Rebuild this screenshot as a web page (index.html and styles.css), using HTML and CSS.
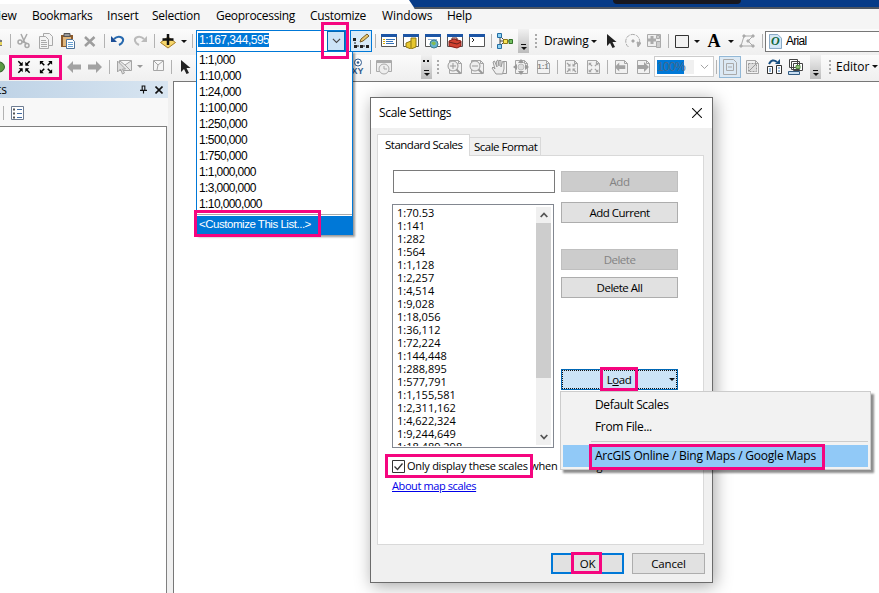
FILE: index.html
```
<!DOCTYPE html>
<html lang="en">
<head>
	<meta charset="UTF-8">
	<title>Scale Settings</title>
	<link rel="stylesheet" href="styles.css">
</head>
<body>
	<svg class="defs">
		<symbol id="page" viewBox="0 0 16 16"><path d="M2.500 1.500h9l3 3v10h-12z" fill="#f1f1f1" stroke="#a6a6a6"/><path d="M11.500 1.500v3h3" fill="none" stroke="#a6a6a6"/></symbol>
		<symbol id="win" viewBox="0 0 16 16"><path d="M.5 1.500h15v12H.5z" fill="#fff" stroke="#555"/><path d="M0 1h16v3H0z" fill="#1c55a5"/></symbol>
		<symbol id="pointer" viewBox="0 0 16 16"><path d="M4 1v12l3-3 2.500 5 2.500-1-2.500-5h4z" fill="#222"/></symbol>
		<symbol id="shrink" viewBox="0 0 16 16"><path d="M1.500 1.500l4 4M14.500 1.500l-4 4M1.500 14.500l4-4M14.500 14.500l-4-4" stroke="currentColor" stroke-width="1.800"/><path d="M2 6.500h4.500V2zM14 6.500H9.500V2zM2 9.500h4.500V14zM14 9.500H9.500V14z" fill="currentColor"/></symbol>
		<symbol id="expand" viewBox="0 0 16 16"><path d="M2 2l4 4M14 2l-4 4M2 14l4-4M14 14l-4-4" stroke="currentColor" stroke-width="1.800"/><path d="M1 1h4.500L1 5.500zM15 1h-4.500L15 5.500zM1 15h4.500L1 10.500zM15 15h-4.500l4.500-4.500z" fill="currentColor"/></symbol>
		<symbol id="arrow" viewBox="0 0 16 16"><path d="M1 8l6-6v3.500h8v5H7V14z" fill="currentColor"/></symbol>
	</svg>

	<div class="titlebar"><i></i></div>

	<nav class="menubar">
		<span class="m-view">View</span>
		<span class="m-book">Bookmarks</span>
		<span class="m-insert">Insert</span>
		<span class="m-select">Selection</span>
		<span class="m-geo">Geoprocessing</span>
		<span class="m-custom">Customize</span>
		<span class="m-win">Windows</span>
		<span>Help</span>
	</nav>

	<div class="toolbar">
		<span class="tool cut-off"><svg viewBox="0 0 16 16"><path d="M4 3h7l1 5H4z" fill="#fff" stroke="#666"/><path d="M1 7h13v6H1z" fill="#777"/><path d="M8 9h6v3H8z" fill="#e7d45c"/></svg></span>
		<span class="sep"></span>
		<span class="tool"><svg viewBox="0 0 16 16" fill="none" stroke="#a8a8a8" stroke-width="1.500"><path d="M5 1l4 9M11 1L7 9"/><circle cx="4" cy="9" r="2"/><circle cx="11" cy="12.500" r="2"/><path d="M6 8.500l5 2"/></svg></span>
		<span class="tool"><svg viewBox="0 0 16 16" fill="#f3f3f3" stroke="#a8a8a8"><path d="M5.500.500h6l3 3v9h-9z"/><path d="M1.500 3.500h6l3 3v9h-9z"/><path d="M3 7.500h5M3 9.500h6M3 11.500h6M3 13.500h6"/></svg></span>
		<span class="tool"><svg viewBox="0 0 16 16"><path d="M1 2h12v12H1z" fill="#8b5a2b"/><path d="M3 4h8v9H3z" fill="#e0b67c"/><path d="M4 .5h6v3H4z" fill="#999" stroke="#555"/><path d="M6.500 6.500h6l2 2v7h-8z" fill="#fff" stroke="#507399"/><path d="M8 9.500h5M8 11.500h5M8 13.500h5" stroke="#67a2d5"/></svg></span>
		<span class="tool"><svg viewBox="0 0 16 16"><path d="M3 4l9.500 9M12.500 4L3 13" stroke="#9d9d9d" stroke-width="2.500"/></svg></span>
		<span class="sep"></span>
		<span class="tool"><svg viewBox="0 0 16 16"><path d="M4 6C8 2 14 4 13 8c-.5 2-2 3-4 4" fill="none" stroke="#286aaf" stroke-width="2"/><path d="M1 3v6h6z" fill="#1c4e96"/></svg></span>
		<span class="tool"><svg viewBox="0 0 16 16"><path d="M12 6C8 2 2 4 3 8c.5 2 2 3 4 4" fill="none" stroke="#bbb" stroke-width="2"/><path d="M15 3v6H9z" fill="#bbb"/></svg></span>
		<span class="sep"></span>
		<span class="tool"><svg viewBox="0 0 16 16"><path d="M8 4l7.500 5.500L8 15 .5 9.500z" fill="#f6d66b" stroke="#a67c25"/><path d="M8 1v11M2.500 6.500h11" stroke="#111" stroke-width="2.500"/></svg></span>
		<span class="caret w10"></span>
		<span class="sep w7"></span>
		<div class="scale-combo">
			<span class="picked">1:167,344,595</span>
			<button class="drop"><svg viewBox="0 0 10 6"><path d="M1 1l4 4 4-4" fill="none" stroke="#444" stroke-width="1.200"/></svg></button>
		</div>
		<span class="tool hot"><svg viewBox="0 0 16 16"><path d="M2 6v7h12" fill="none" stroke="#222" stroke-dasharray="2 1"/><path d="M0 5h3v3H0zM1 12h3v3H1zM7 12h3v3H7zM13 12h3v3h-3z" fill="#222"/><path d="M7 9l1-3 6-5 2 2-6 5z" fill="#e8c66c" stroke="#765b25"/></svg></span>
		<span class="sep"></span>
		<span class="tool"><svg viewBox="0 0 16 16"><use href="#win"/><path d="M2 6.500h2M2 8.500h2M2 10.500h2" stroke="#d7a900"/><path d="M5 6.500h9M5 8.500h7M5 10.500h8" stroke="#3672b8"/></svg></span>
		<span class="tool"><svg viewBox="0 0 16 16"><use href="#win"/><path d="M3 10l5-2V5h5v9l-5 2-5-2z" fill="#e7c72f" stroke="#8e7610"/><path d="M8 8v7" stroke="#8e7610"/></svg></span>
		<span class="tool"><svg viewBox="0 0 16 16"><use href="#win"/><path d="M3 6.500h9" stroke="#8cb1da"/><circle cx="9" cy="11" r="4" fill="#67b2cf" stroke="#3a7c8d"/><path d="M6 10q3-3 5 0-1 3-3 2z" fill="#83bc52"/></svg></span>
		<span class="tool"><svg viewBox="0 0 16 16"><use href="#win"/><path d="M2 8l5-2 7 2v5l-4 2-8-2z" fill="#d14131" stroke="#8b1c16"/><path d="M5 7V5h5v3M2 9l8 2 4-2" fill="none" stroke="#65201b"/></svg></span>
		<span class="tool"><svg viewBox="0 0 16 16"><use href="#win"/><path d="M3 5l2 2-2 2" fill="none" stroke="#222"/></svg></span>
		<span class="sep"></span>
		<span class="tool"><svg viewBox="0 0 16 16"><path d="M3 3v10M3 8h12M3 3l5 5-5 5" fill="none" stroke="#444"/><path d="M.5.500h4v4h-4zM.5 11.500h4v4h-4z" fill="#8ed2f4" stroke="#246da1"/><path d="M6.500 6.500h4v4h-4z" fill="#f9e65a" stroke="#907a15"/><path d="M12 6.500h3.500v4H12z" fill="#75c162" stroke="#337229"/></svg></span>
		<span class="overflow"></span>
		<span class="grip"></span>
		<span class="label drawing">Drawing</span>
		<span class="caret w12"></span>
		<span class="tool"><svg viewBox="0 0 16 16"><use href="#pointer"/></svg></span>
		<span class="tool w21"><svg viewBox="0 0 16 16" fill="none" stroke="#aaa"><path d="M3.500 14A7 7 0 1 1 13 13" stroke-dasharray="4 1"/><path d="M7 7h2v2H7z" fill="#999"/><path d="M12 9l1 5 3-4z" fill="#aaa"/></svg></span>
		<span class="tool"><svg viewBox="0 0 16 16" stroke="#aaa" fill="#eee"><path d="M1.500 1.500h13v12h-13z"/><path d="M6 3v8M2 7h8" stroke-width="3"/><path d="M10.500 2.500h3v3h-3zM10.500 8.500h4v6h-4z" fill="#ccc"/></svg></span>
		<span class="sep"></span>
		<span class="tool"><svg viewBox="0 0 16 16"><path d="M1.500 2.500h13v12h-13z" fill="#f1f1f1" stroke="#333"/></svg></span>
		<span class="caret w8"></span>
		<span class="tool w26 big-a">A</span>
		<span class="caret w8"></span>
		<span class="tool w24"><svg viewBox="0 0 16 16" fill="none" stroke="#aaa"><path d="M2 13L5 3h9l-5 5 5 5z"/><path d="M1 12h2v2H1zM4 2h2v2H4zM13 2h2v2h-2zM8 7h2v2H8zM13 12h2v2h-2z" fill="#aaa"/></svg></span>
		<span class="sep"></span>
		<div class="font-combo"><svg viewBox="0 0 14 16"><path d="M.5.500h9l4 4v11H.5z" fill="#d5e8f7" stroke="#7da0be"/></svg><b>O</b><span>Arial</span></div>
	</div>

	<div class="toolbar second">
		<span class="tool globe"></span>
		<span class="tool small"><svg viewBox="0 0 16 16"><use href="#shrink"/></svg></span>
		<span class="tool small"><svg viewBox="0 0 16 16"><use href="#expand"/></svg></span>
		<span class="tool gray back"><svg viewBox="0 0 16 16"><use href="#arrow"/></svg></span>
		<span class="tool gray w21 flip"><svg viewBox="0 0 16 16"><use href="#arrow"/></svg></span>
		<span class="sep"></span>
		<span class="tool w24"><svg viewBox="0 0 16 16" fill="#e8e8e8" stroke="#a5a5a5"><path d="M3.500 1.500h12v10h-12zM4 2l5 4 6-4M9 6l5 5"/><path d="M1.500 2v11l3-3 2 5 2-1-2-4h3z" fill="#ddd"/></svg></span>
		<span class="caret w8 dim"></span>
		<span class="tool region"><svg viewBox="0 0 16 16" fill="#f5f5f5" stroke="#a5a5a5"><path d="M3.500 1.500h10v10h-10zM4 2l4 4 5-4M8 6l-1 5"/></svg></span>
		<span class="sep w5"></span>
		<span class="tool"><svg viewBox="0 0 16 16"><use href="#pointer"/></svg></span>
		<span class="xy"><svg viewBox="0 0 10 9"><circle cx="5" cy="4.500" r="3.500" fill="#fff" stroke="#315b8d"/><circle cx="5" cy="4.500" r="1.300" fill="#315b8d"/></svg>XY</span>
		<span class="sep"></span>
		<span class="tool"><svg viewBox="0 0 16 16" fill="#eee" stroke="#aaa"><path d="M.5 1.500h15v11H.5z"/><path d="M1 3h14" stroke-width="2"/><circle cx="8" cy="10" r="5"/><path d="M8 7v3h3" fill="none"/></svg></span>
		<span class="overflow more"></span>
		<span class="grip"></span>
		<span class="tool"><svg viewBox="0 0 16 16" fill="#eee" stroke="#999"><use href="#page"/><circle cx="6" cy="7" r="5"/><path d="M3 7h6M6 4v6"/><path d="M9.500 10.500l4 4" stroke-width="2"/></svg></span>
		<span class="tool"><svg viewBox="0 0 16 16" fill="#eee" stroke="#999"><use href="#page"/><circle cx="6" cy="7" r="5"/><path d="M3 7h6"/><path d="M9.500 10.500l4 4" stroke-width="2"/></svg></span>
		<span class="tool"><svg viewBox="0 0 16 16" fill="#eee" stroke="#999"><path d="M5 15l-4-6 1-1 2 2-2-7 1.500-1L6 8l-.5-6L7 1l1 6V1.500h2V8l1.500-5.500 1.500.5v7l-1.500 5z"/><path d="M12 2.500h3.500v12H12" fill="none"/></svg></span>
		<span class="tool"><svg viewBox="0 0 16 16" fill="#999"><use href="#page"/><circle cx="8" cy="8" r="3" fill="#ddd" stroke="#bbb"/><path d="M8 0l3 4H5zM8 16l3-4H5zM0 8l4-3v6zM16 8l-4-3v6z"/></svg></span>
		<span class="tool one"><svg viewBox="0 0 16 16"><use href="#page"/></svg><small>1:1</small></span>
		<span class="sep"></span>
		<span class="tool gray"><svg viewBox="0 0 16 16"><use href="#page"/><use href="#shrink" x="3" y="3" width="11" height="11"/></svg></span>
		<span class="tool gray"><svg viewBox="0 0 16 16"><use href="#page"/><use href="#expand" x="3" y="3" width="11" height="11"/></svg></span>
		<span class="sep"></span>
		<span class="tool gray"><svg viewBox="0 0 16 16"><use href="#page"/><use href="#arrow" x="1" y="2" width="12" height="12"/></svg></span>
		<span class="tool gray"><svg viewBox="0 0 16 16"><use href="#page"/><path d="M14 8L9 3v3H2v4h7v3z" fill="currentColor"/></svg></span>
		<div class="zoom-combo"><span>100%</span><svg viewBox="0 0 10 6"><path d="M1 1l4 4 4-4" fill="none" stroke="#999"/></svg></div>
		<span class="sep w5"></span>
		<span class="tool hot pressed"><svg viewBox="0 0 16 16" fill="none" stroke="#aaa"><path d="M1.500.500h10l3 3v12h-13z"/><path d="M4.500 4.500h7v7h-7zM6 8h4"/></svg></span>
		<span class="tool"><svg viewBox="0 0 16 16" fill="#ddd" stroke="#999"><use href="#page"/><path d="M4.500 4.500h8v8h-8z" stroke-dasharray="2 1"/><path d="M5 12l7-7"/></svg></span>
		<span class="tool"><svg viewBox="0 0 16 16"><path d="M1.500 7.500h5v7h-5zM10.500 6.500h5v8h-5z" fill="#fff" stroke="#333"/><path d="M3 10h2M3 12h2M12 9h2M12 12h2" stroke="#3679b7"/><path d="M3 5q3-6 8-2" fill="none" stroke="#174f81" stroke-width="2"/><path d="M9 5h5V0z" fill="#174f81"/></svg></span>
		<span class="tool"><svg viewBox="0 0 16 16" fill="#fff" stroke="#444"><path d="M1.500.500h8v8h-8zM3.500 2.500h8v8h-8zM5.500 4.500h9v7h-9z"/><path d="M8 6.500h4v3H8z" fill="#91c37a" stroke="#579144"/><path d="M.5 12.500h11v3H.5z" fill="#c9def1" stroke="#315b82"/></svg></span>
		<span class="overflow last"></span>
		<span class="grip w15"></span>
		<span class="label editor">Editor</span>
		<span class="caret w8"></span>
	</div>

	<div class="work">
		<aside>
			<header><span>ts</span><svg class="pin" viewBox="0 0 8 9"><path d="M2.500 0v5M2 .5h4M5.500 0v5M0 5.500h8M4 6v3" fill="none" stroke="#111" stroke-width="1.300"/></svg><svg class="x" viewBox="0 0 8 8"><path d="M.5.500l7 7M7.500.500l-7 7" stroke="#111" stroke-width="1.600"/></svg></header>
			<div class="toc-tools"><span class="sep"></span><svg viewBox="0 0 13 14"><path d="M.5.500h12v13H.5z" fill="#fff" stroke="#6e7c91"/><path d="M6 3.500h5M6 7.500h5M6 11.500h5" stroke="#446da3"/><path d="M2 2.500h2v2H2zM2 6.500h2v2H2zM2 10.500h2v2H2z" fill="#555"/></svg></div>
			<div class="toc"></div>
		</aside>
		<main></main>
	</div>

	<div class="scale-list">
		<ul>
			<li>1:1,000</li>
			<li>1:10,000</li>
			<li>1:24,000</li>
			<li>1:100,000</li>
			<li>1:250,000</li>
			<li>1:500,000</li>
			<li>1:750,000</li>
			<li>1:1,000,000</li>
			<li>1:3,000,000</li>
			<li>1:10,000,000</li>
		</ul>
		<div class="customize">&lt;Customize This List...&gt;</div>
	</div>

	<section class="dialog">
		<header><span>Scale Settings</span><svg viewBox="0 0 10 10"><path d="M0 0l10 10M10 0L0 10" stroke="#111" stroke-width="1.100"/></svg></header>
		<div class="tabs"><span class="active">Standard Scales</span><span>Scale Format</span></div>
		<div class="pane">
			<div class="columns">
				<div class="left">
					<input type="text">
					<div class="listbox">
						<ul>
							<li>1:70.53</li>
							<li>1:141</li>
							<li>1:282</li>
							<li>1:564</li>
							<li>1:1,128</li>
							<li>1:2,257</li>
							<li>1:4,514</li>
							<li>1:9,028</li>
							<li>1:18,056</li>
							<li>1:36,112</li>
							<li>1:72,224</li>
							<li>1:144,448</li>
							<li>1:288,895</li>
							<li>1:577,791</li>
							<li>1:1,155,581</li>
							<li>1:2,311,162</li>
							<li>1:4,622,324</li>
							<li>1:9,244,649</li>
							<li>1:18,489,298</li>
						</ul>
						<div class="scrollbar">
							<svg viewBox="0 0 8 6"><path d="M.7 5L4 1.500 7.300 5" fill="none" stroke="#555" stroke-width="1.800"/></svg>
							<i></i>
							<svg viewBox="0 0 8 6"><path d="M.7 1L4 4.500 7.300 1" fill="none" stroke="#555" stroke-width="1.800"/></svg>
						</div>
					</div>
				</div>
				<div class="side">
					<button class="btn" disabled>Add</button>
					<button class="btn current">Add Current</button>
					<button class="btn delete" disabled>Delete</button>
					<button class="btn all">Delete All</button>
					<button class="btn load"><span>L<u>o</u>ad</span><i class="caret"></i></button>
				</div>
			</div>
			<label class="only"><svg viewBox="0 0 13 13"><path d="M.5.500h12v12H.5z" fill="#fff" stroke="#333"/><path d="M2.500 6.500l3 3 5-6" fill="none" stroke="#333" stroke-width="1.300"/></svg><span>Only display these scales when zooming</span></label>
			<a href="#">About map scales</a>
		</div>
		<footer><button class="btn ok">OK</button><button class="btn">Cancel</button></footer>
	</section>

	<div class="load-menu">
		<div>Default Scales</div>
		<div>From File...</div>
		<hr>
		<div class="selected">ArcGIS Online / Bing Maps / Google Maps</div>
	</div>

	<!-- highlights -->
	<i class="mark mark-zoom"></i>
	<i class="mark mark-drop"></i>
	<i class="mark mark-customize"></i>
	<i class="mark mark-load"></i>
	<i class="mark mark-arcgis"></i>
	<i class="mark mark-only"></i>
	<i class="mark mark-ok"></i>
</body>
</html>
```
FILE: styles.css
```
* {
	box-sizing: border-box;
}
body {
	margin: 0;
	width: 879px;
	height: 593px;
	position: relative;
	overflow: hidden;
	background: #f5f5f5;
	color: #000;
	font: 12px/16px "Open Sans", "Noto Sans", sans-serif;
	display: flex;
	flex-direction: column;
}
svg {
	display: block;
	flex: none;
}
.defs {
	position: absolute;
	width: 0;
	height: 0;
}
button {
	font: inherit;
	color: inherit;
	padding: 0;
}
ul {
	list-style: none;
	margin: 0;
	padding: 0;
}

/* title strip and menu */
.titlebar {
	height: 7px;
	padding-left: 409px;
	background: linear-gradient(#fff 4px, #f5f5f5 4px);
}
.titlebar::before {
	content: "";
	display: block;
	height: 7px;
	background: #063b88;
	border-bottom: 2px solid #4c5561;
	clip-path: polygon(0 0, 100% 0, 100% 100%, 6px 100%);
}
.titlebar i {
	position: absolute;
	left: 613px;
	top: 0;
	width: 128px;
	height: 4px;
	background: #17171f;
	border-radius: 0 0 4px 4px;
}
.menubar {
	height: 22px;
	display: flex;
	align-items: center;
	padding-bottom: 4px;
	white-space: nowrap;
}
.menubar span {
	flex: none;
	letter-spacing: -0.3px;
}
.menubar .m-view {
	width: 41px;
	margin-left: -9px;
}
.m-book { width: 75px; }
.m-insert { width: 45px; }
.m-select { width: 64px; }
.m-geo { width: 94px; }
.m-custom { width: 72px; }
.m-win { width: 65px; }
.menubar .m-view,
.menubar .m-insert,
.menubar .m-win {
	letter-spacing: -0.1px;
}

/* toolbars, tools sit in 22px slots */
.toolbar {
	height: 26px;
	flex: none;
	display: flex;
	align-items: center;
	padding-bottom: 2px;
	background: linear-gradient(#fbfbfb, #efefef);
}
.toolbar.second {
	padding-bottom: 3px;
}
.toolbar > * {
	flex: none;
}
.tool {
	width: 22px;
	height: 22px;
	display: flex;
	align-items: center;
	justify-content: center;
}
.tool svg {
	width: 16px;
	height: 16px;
}
.tool.cut-off {
	width: 7px;
	padding-right: 3px;
	justify-content: flex-end;
	overflow: hidden;
}
.gray { color: #a2a2a2; }
.flip { transform: scaleX(-1); }
.back { margin-left: 6px; }
.sep {
	width: 6px;
	height: 14px;
	background: linear-gradient(#b2b2b2, #b2b2b2) center / 1px 100% no-repeat;
}
.caret {
	display: flex;
	justify-content: center;
}
.caret::before {
	content: "";
	border: 3px solid transparent;
	border-top-color: #111;
	border-bottom: 0;
}
.caret.dim::before { border-top-color: #999; }
.toolbar .w5 { width: 5px; }
.toolbar .w7 { width: 7px; }
.toolbar .w8 { width: 8px; }
.toolbar .w10 { width: 10px; }
.toolbar .w12 { width: 12px; }
.toolbar .w15 { width: 15px; }
.toolbar .w21 { width: 21px; }
.toolbar .w24 { width: 24px; }
.toolbar .w26 { width: 26px; }
.tool.small svg {
	width: 14px;
	height: 14px;
}
.scale-combo {
	width: 150px;
	height: 22px;
	margin-right: 4px;
	border: 1px solid #0078d7;
	background: #fff;
	display: flex;
	justify-content: space-between;
	font: 12px/14px "Liberation Sans", sans-serif;
	letter-spacing: -0.5px;
}
.picked {
	height: 14px;
	margin: 2px 0 0 1px;
	padding-left: 1px;
	background: #0078d7;
	color: #fff;
}
.drop {
	width: 18px;
	display: flex;
	align-items: center;
	justify-content: center;
	background: #cce4f7;
	border: 1px solid #0067b5;
}
.drop svg {
	width: 9px;
}
.hot {
	border: 1px solid #0078d7;
	background: #d9ebf9;
}
.hot.pressed {
	border-color: #93b8d6;
	background: #dce9f4;
}
.overflow {
	width: 11px;
	height: 24px;
	margin: 0 1px 0 2px;
	align-self: flex-start;
	background: linear-gradient(#f1f1f1, #bcbcbc);
	display: flex;
	flex-direction: column;
	align-items: center;
	justify-content: flex-end;
	padding-bottom: 3px;
}
.overflow::before {
	content: "";
	width: 5px;
	height: 1px;
	background: #111;
	margin-bottom: 2px;
}
.overflow::after {
	content: "";
	border: 3px solid transparent;
	border-top-color: #111;
	border-bottom: 0;
}
.overflow.more {
	margin: 0 0 0 26px;
	background:
		linear-gradient(#111, #111) 2px 5px / 2px 2px no-repeat,
		linear-gradient(#111, #111) 6px 5px / 2px 2px no-repeat,
		linear-gradient(#f1f1f1, #bcbcbc);
}
.overflow.last {
	margin-left: 3px;
}
.grip {
	width: 12px;
	height: 14px;
	background: repeating-linear-gradient(#aaa 0 2px, transparent 2px 4px) center / 2px 100% no-repeat;
}
.label {
	white-space: nowrap;
}
.drawing {
	width: 44px;
	margin-left: 2px;
	letter-spacing: -0.3px;
}
.editor {
	width: 35px;
	margin-left: -1px;
}
.big-a {
	font: bold 18px/20px "Liberation Serif", serif;
}
.font-combo {
	flex: 1;
	height: 21px;
	border: 1px solid #777;
	border-right: 0;
	background: #fff;
	display: flex;
	align-items: center;
	position: relative;
	padding-left: 3px;
	gap: 4px;
	font: 12px/16px "Liberation Sans", sans-serif;
	letter-spacing: -0.7px;
}
.font-combo svg {
	width: 13px;
	height: 15px;
}
.font-combo b {
	position: absolute;
	left: 5px;
	font: italic bold 12px/15px "Liberation Serif", serif;
	color: #11663a;
}
.globe {
	width: 16px;
	height: 12px;
	margin: 0 6px 0 -11px;
	border-radius: 50%;
	background: #5b9943;
	border: 1px solid #35652d;
}
.globe + .tool { margin-left: 2px; }
.region { margin-left: 3px; }
.xy {
	width: 11px;
	margin: 0 0 0 156px;
	font: bold 9px/8px "Liberation Sans", sans-serif;
	color: #315b8d;
	display: flex;
	flex-direction: column;
	align-items: center;
}
.xy svg {
	width: 10px;
	height: 9px;
}
.xy + .sep { margin-left: 4px; }
.one {
	position: relative;
}
.one small {
	position: absolute;
	font: bold 8px/9px "Liberation Sans", sans-serif;
	color: #888;
}
.zoom-combo {
	width: 60px;
	height: 21px;
	border: 1px solid #ccc;
	background: #fff;
	display: flex;
	align-items: center;
	justify-content: space-between;
	padding: 0 4px 0 2px;
	font: 12px/14px "Liberation Sans", sans-serif;
	letter-spacing: -0.7px;
	color: #45698d;
}
.zoom-combo span {
	width: 37px;
	background: linear-gradient(90deg, #0078d7 27px, #f0f0f0 27px);
}
.zoom-combo svg {
	width: 9px;
}

/* table of contents and map */
.work {
	flex: 1;
	display: flex;
}
aside {
	width: 173px;
	display: flex;
	flex-direction: column;
	background: #f0f0f0;
}
aside header {
	width: 168px;
	height: 17px;
	display: flex;
	align-items: center;
	background: linear-gradient(90deg, #bfd3e6, #d8e5f1);
}
aside header span {
	margin: 1px auto 0 -3px;
}
.pin {
	width: 7px;
	height: 9px;
	margin-right: 8px;
}
.x {
	width: 8px;
	height: 8px;
	margin-right: 5px;
}
.toc-tools {
	height: 28px;
	display: flex;
	align-items: center;
	gap: 5px;
	background: #f8f8f8;
	padding: 2px 0 0;
	margin-right: 5px;
}
.toc-tools svg {
	width: 13px;
	height: 14px;
}
.toc {
	flex: 1;
	width: 167px;
	border: solid #808080;
	border-width: 1px 1px 0 0;
	background: #fff;
}
main {
	flex: 1;
	background: #fff;
	border: solid #777;
	border-width: 1px 0 0 1px;
}

.scale-list {
	position: absolute;
	left: 196px;
	top: 51px;
	width: 157px;
	height: 184px;
	border: 1px solid #0078d7;
	background: #fff;
	box-shadow: 2px 2px 2px rgba(0, 0, 0, 0.4);
	font: 12px/16px "Liberation Sans", sans-serif;
	letter-spacing: -0.6px;
}
.scale-list ul {
	padding-left: 2px;
	border-bottom: 1px solid #aaa;
	height: 163px;
}
.customize {
	height: 18px;
	line-height: 17px;
	margin-top: 1px;
	padding-left: 2px;
	background: #0078d7;
	color: #fff;
	font-size: 11.5px;
	letter-spacing: -0.47px;
}

/* dialog */
.dialog {
	position: absolute;
	left: 370px;
	top: 97px;
	width: 343px;
	height: 486px;
	border: 1px solid #6b6b6b;
	background: #f0f0f0;
	box-shadow: 2px 3px 16px rgba(0, 0, 0, 0.35);
	display: flex;
	flex-direction: column;
}
.dialog header {
	height: 30px;
	background: #fff;
	display: flex;
	align-items: center;
	justify-content: space-between;
	padding: 0 10px 0 8px;
	letter-spacing: -0.3px;
}
.dialog header svg {
	width: 10px;
	height: 10px;
}
.tabs {
	height: 27px;
	padding: 6px 0 0 6px;
	display: flex;
	align-items: flex-end;
}
.tabs span {
	height: 18px;
	padding: 1px 4px 0;
	border: 1px solid #d9d9d9;
	border-width: 1px 1px 0 0;
	white-space: nowrap;
	width: 71px;
	font-size: 11.5px;
	letter-spacing: -0.5px;
}
.tabs .active {
	width: 93px;
	height: 22px;
	padding: 2px 7px 0;
	margin-bottom: -1px;
	border-left-width: 1px;
	background: #fff;
	position: relative;
}
.pane {
	width: 327px;
	height: 390px;
	margin-left: 6px;
	border: 1px solid #d9d9d9;
	background: #fff;
	padding: 14px 0 0 14px;
}
.columns {
	display: flex;
	gap: 7px;
}
.left {
	width: 162px;
}
.left input {
	display: block;
	width: 162px;
	height: 23px;
	margin: 0 0 11px 1px;
	border: 1px solid #7a7a7a;
	background: #fff;
}
.listbox {
	height: 244px;
	border: 1px solid #828790;
	padding: 1px 2px 2px;
	display: flex;
	overflow: hidden;
	justify-content: space-between;
	font-size: 11px;
	line-height: 13px;
}
.listbox ul {
	padding-left: 2px;
	height: 240px;
	overflow: hidden;
}
.scrollbar {
	width: 15px;
	margin-top: 1px;
	background: #f0f0f0;
	display: flex;
	flex-direction: column;
	align-items: center;
}
.scrollbar svg {
	width: 8px;
	height: 6px;
	margin: 5px 0;
}
.scrollbar i {
	width: 15px;
	height: 155px;
	background: #cdcdcd;
	margin-bottom: auto;
}
.side {
	display: flex;
	flex-direction: column;
}
.btn {
	width: 117px;
	height: 21px;
	border: 1px solid #adadad;
	background: #e1e1e1;
	font-size: 11.5px;
	line-height: 18px;
	letter-spacing: -0.5px;
}
.btn:disabled {
	background: #ccc;
	border-color: #bfbfbf;
	color: #838383;
}
.side .btn { margin-top: 1px; }
.side .current { margin-top: 10px; }
.side .delete { margin-top: 26px; }
.side .all { margin-top: 7px; }
.side .load {
	margin-top: 71px;
	display: flex;
	align-items: center;
	border: 1px solid #0067b5;
	outline: 1px dotted #111;
	outline-offset: -2px;
	background: #cce4f7;
}
.load span {
	flex: 1;
	padding-left: 9px;
}
.load .caret { width: 10px; }
.only {
	display: flex;
	align-items: center;
	gap: 2px;
	height: 16px;
	margin-top: 10px;
	font-size: 11px;
	letter-spacing: -0.26px;
	white-space: nowrap;
}
.only svg {
	width: 13px;
	height: 13px;
}
.pane a {
	display: block;
	margin-top: 4px;
	color: #0000e8;
	font-size: 11px;
	letter-spacing: -0.4px;
}
.dialog footer {
	display: flex;
	justify-content: flex-end;
	gap: 8px;
	padding: 8px 7px 0 0;
}
.dialog footer .btn {
	width: 73px;
	letter-spacing: -0.2px;
}
.dialog footer .ok {
	border: 2px solid #0078d7;
	line-height: 16px;
}

.load-menu {
	position: absolute;
	left: 560px;
	top: 391px;
	width: 311px;
	height: 79px;
	padding: 2px;
	border: 1px solid #ccc;
	background: #f2f2f2;
	box-shadow: 3px 3px 2px rgba(0, 0, 0, 0.45);
}
.load-menu div {
	height: 22px;
	line-height: 22px;
	padding-left: 32px;
	letter-spacing: -0.35px;
}
.load-menu hr {
	margin: 3px 0 3px 28px;
	border: 0;
	border-top: 1px solid #ccc;
}
.load-menu .selected {
	background: #91c9f7;
	letter-spacing: -0.22px;
}

.mark {
	position: absolute;
	border: 3px solid #f5057f;
}
.mark-zoom { left: 9px; top: 55px; width: 53px; height: 25px; }
.mark-drop { left: 321px; top: 22px; width: 28px; height: 37px; }
.mark-customize { left: 194px; top: 210px; width: 127px; height: 27px; }
.mark-load { left: 600px; top: 367px; width: 38px; height: 24px; }
.mark-arcgis { left: 589px; top: 444px; width: 236px; height: 26px; }
.mark-only { left: 385px; top: 454px; width: 148px; height: 24px; }
.mark-ok { left: 571px; top: 552px; width: 31px; height: 22px; }
```
